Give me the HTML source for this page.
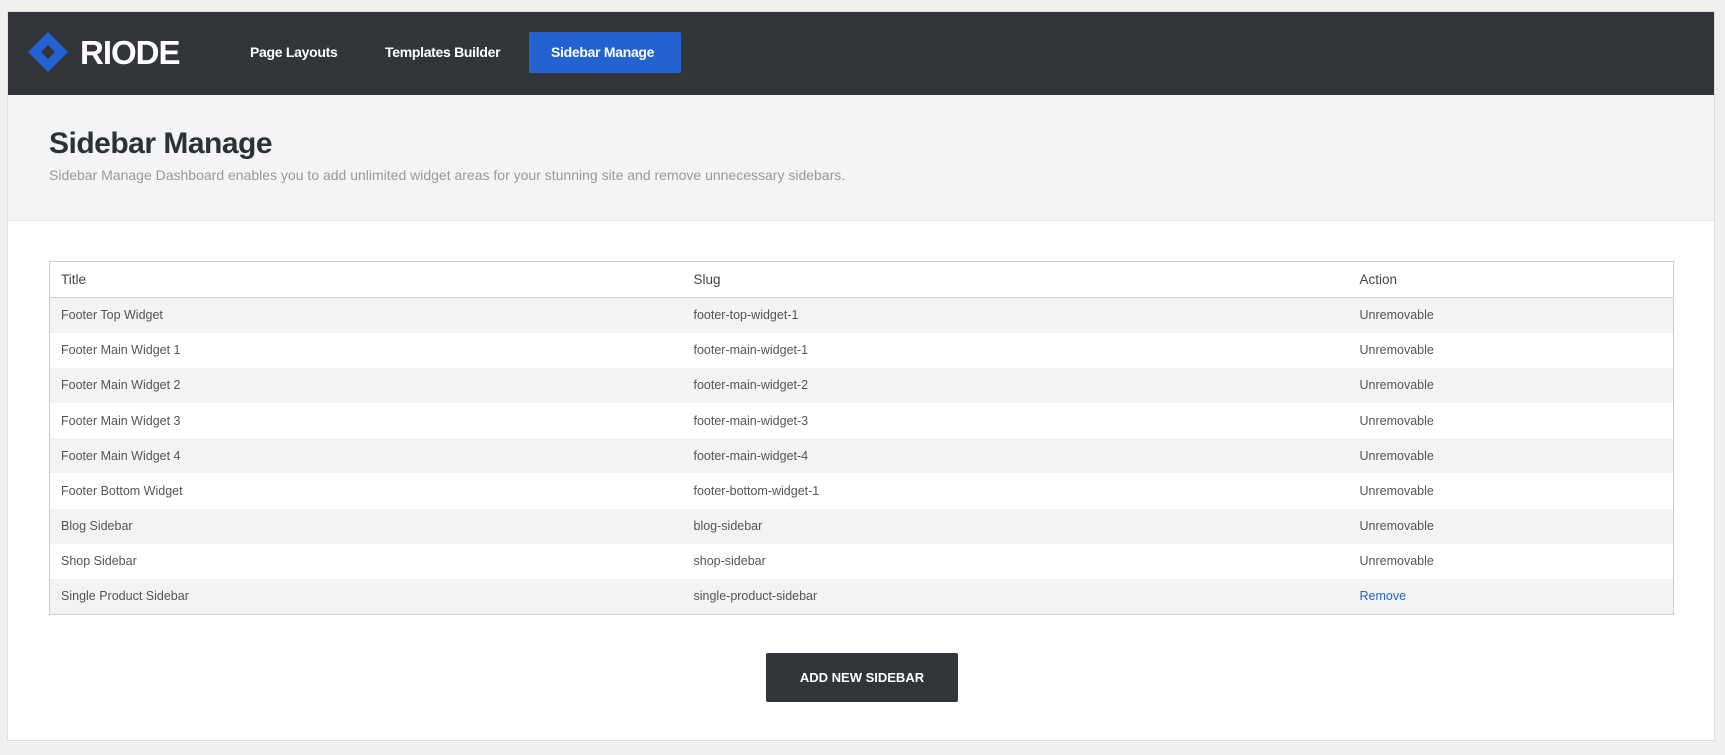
<!DOCTYPE html>
<html><head><style>
*{box-sizing:border-box;margin:0;padding:0}
body{width:1725px;height:755px;background:#f0f0f1;font-family:"Liberation Sans",sans-serif;position:relative;overflow:hidden}
.card{position:absolute;left:7px;top:11px;width:1708px;height:730px;background:#fff;border:1px solid #ddd}
.hdr{position:absolute;left:0;top:0;width:100%;height:83px;background:#32363b}
.logo{position:absolute;left:20px;top:20px}
.logotxt{position:absolute;left:72px;top:22px;color:#fff;font-size:33px;font-weight:bold;letter-spacing:-1px}
.nav{position:absolute;top:20px;height:41px;line-height:41px;color:#fff;font-size:14px;font-weight:bold;letter-spacing:-0.3px}
.btn{background:#2362d0;border-radius:2px;padding:0 22px}
.sec{position:absolute;left:0;top:83px;width:100%;height:126px;background:#f3f4f5;border-bottom:1px solid #e5e5e5}
h1{position:absolute;left:41px;top:32px;font-size:30px;color:#2d3136;letter-spacing:-0.5px}
.sub{position:absolute;left:41px;top:72px;font-size:14px;color:#999}
table{position:absolute;left:41px;top:249px;width:1625px;border-collapse:collapse;border:1px solid #ccc;font-size:12.5px;color:#555}
th{font-weight:normal;text-align:left;height:36px;padding-left:11px;border-bottom:1px solid #ccc;color:#444;font-size:13.5px}
td{height:35.2px;padding-left:11px}
tr:nth-child(even) td{background:#f3f3f3}
.rm{color:#2362d0}
.add{position:absolute;left:758px;top:641px;width:192px;height:49px;background:#32363b;border-radius:2px;color:#fff;font-size:13px;font-weight:bold;text-align:center;line-height:49px}
</style></head><body>
<div class="card">
<div class="hdr">
<svg class="logo" width="40" height="40" viewBox="0 0 40 40"><path d="M20 0L40 20L20 40L0 20Z" fill="#2362d0"/><path d="M20 13L27 20L20 27L13 20Z" fill="#32363b"/></svg>
<div class="logotxt">RIODE</div>
<div class="nav" style="left:242px">Page Layouts</div>
<div class="nav" style="left:377px">Templates Builder</div>
<div class="nav btn" style="left:521px;width:152px">Sidebar Manage</div>
</div>
<div class="sec"><h1>Sidebar Manage</h1><div class="sub">Sidebar Manage Dashboard enables you to add unlimited widget areas for your stunning site and remove unnecessary sidebars.</div></div>
<table>
<tr><th style="width:633px">Title</th><th style="width:666px">Slug</th><th>Action</th></tr>
<tr><td>Footer Top Widget</td><td>footer-top-widget-1</td><td>Unremovable</td></tr>
<tr><td>Footer Main Widget 1</td><td>footer-main-widget-1</td><td>Unremovable</td></tr>
<tr><td>Footer Main Widget 2</td><td>footer-main-widget-2</td><td>Unremovable</td></tr>
<tr><td>Footer Main Widget 3</td><td>footer-main-widget-3</td><td>Unremovable</td></tr>
<tr><td>Footer Main Widget 4</td><td>footer-main-widget-4</td><td>Unremovable</td></tr>
<tr><td>Footer Bottom Widget</td><td>footer-bottom-widget-1</td><td>Unremovable</td></tr>
<tr><td>Blog Sidebar</td><td>blog-sidebar</td><td>Unremovable</td></tr>
<tr><td>Shop Sidebar</td><td>shop-sidebar</td><td>Unremovable</td></tr>
<tr><td>Single Product Sidebar</td><td>single-product-sidebar</td><td class="rm">Remove</td></tr>
</table>
<div class="add">ADD NEW SIDEBAR</div>
</div>
</body></html>
